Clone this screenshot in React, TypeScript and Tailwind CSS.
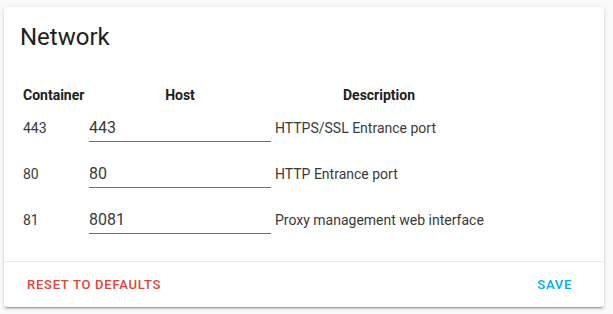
const ports = [
  { container: "443", host: "443", description: "HTTPS/SSL Entrance port" },
  { container: "80", host: "80", description: "HTTP Entrance port" },
  { container: "81", host: "8081", description: "Proxy management web interface" },
];

export default function App() {
  return (
    <div
      className="min-h-[314px] w-[613px] bg-[#fafafa] pl-[4px] pt-[7px]"
      style={{ fontFamily: "Roboto, 'Liberation Sans', sans-serif" }}
    >
      <div className="flex h-[300px] w-[600px] flex-col rounded-[3px] bg-white text-[#212121] shadow-[0_2px_2px_0_rgba(0,0,0,0.14),0_1px_5px_0_rgba(0,0,0,0.12),0_3px_1px_-2px_rgba(0,0,0,0.2)]">
        {/* Title */}
        <div className="px-4 pt-[14px] text-[24px] leading-[32px] text-[#212121]">Network</div>

        {/* Port table */}
        <div className="mt-[32px] pl-[19px]">
          <div className="flex h-[20px] items-center text-[14px] font-bold leading-[20px] text-[#212121]">
            <div className="w-[66px]">Container</div>
            <div className="w-[182px] text-center">Host</div>
            <div className="ml-[4px] w-[208px] text-center">Description</div>
          </div>
          {ports.map((p) => (
            <div key={p.container} className="flex h-[46px] items-center">
              <div className="w-[66px] text-[14px] text-[#3a3a3a]">{p.container}</div>
              <div className="flex h-[28px] w-[182px] items-center border-b border-[#6e6e6e]">
                <input
                  type="text"
                  defaultValue={p.host}
                  className="w-full bg-transparent text-[16px] text-[#3a3a3a] outline-none"
                />
              </div>
              <div className="ml-[4px] w-[208px] whitespace-nowrap text-[14px] text-[#3a3a3a]">
                {p.description}
              </div>
            </div>
          ))}
        </div>

        {/* Actions */}
        <div className="mt-auto flex h-[46px] items-center justify-between border-t border-[#e8e8e8] px-[16px]">
          <button
            type="button"
            className="px-[7px] py-[6px] text-[13px] font-medium uppercase tracking-[0.75px] text-[#de4439]"
          >
            Reset to defaults
          </button>
          <button
            type="button"
            className="px-[16px] py-[6px] text-[13px] font-medium uppercase tracking-[0.75px] text-[#03a9f4]"
          >
            Save
          </button>
        </div>
      </div>
    </div>
  );
}
